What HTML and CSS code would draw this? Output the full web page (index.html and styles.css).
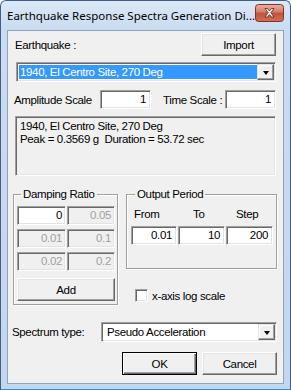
FILE: index.html
```html
<!DOCTYPE html>
<html>
<head>
<meta charset="utf-8">
<link rel="stylesheet" href="styles.css">
</head>
<body>
<div class="window">
  <div class="titlebar">
    <span class="title">Earthquake Response Spectra Generation Di...</span>
    <div class="close">
      <svg width="29" height="18" viewBox="0 0 29 18">
        <defs>
          <linearGradient id="cg" x1="0" y1="0" x2="0" y2="1">
            <stop offset="0" stop-color="#eab1a3"/>
            <stop offset="0.45" stop-color="#d77a66"/>
            <stop offset="0.5" stop-color="#c4513c"/>
            <stop offset="1" stop-color="#d0705a"/>
          </linearGradient>
        </defs>
        <rect x="0.5" y="0.5" width="28" height="17" rx="3" fill="url(#cg)" stroke="#7b3426"/>
        <path d="M10 4.5 L12.5 4.5 L14.5 7 L16.5 4.5 L19 4.5 L15.8 8.8 L19 13 L16.5 13 L14.5 10.6 L12.5 13 L10 13 L13.2 8.8 Z" fill="#fff" stroke="#5a1f15" stroke-width="0.8" stroke-linejoin="round"/>
      </svg>
    </div>
  </div>
  <div class="client">
    <div class="row-eq">
      <span>Earthquake :</span>
      <div class="btn btn-import">Import</div>
    </div>
    <div class="combo combo-eq">
      <div class="combo-val selected">1940, El Centro Site, 270 Deg</div>
      <div class="combo-arrow"><span class="tri"></span></div>
    </div>
    <div class="row-scale">
      <span class="lbl-amp">Amplitude Scale</span>
      <div class="edit edit-scale">1</div>
      <span class="lbl-time">Time Scale :</span>
      <div class="edit edit-scale">1</div>
    </div>
    <div class="memo">1940, El Centro Site, 270 Deg<br>Peak = 0.3569 g&nbsp; Duration = 53.72 sec</div>
    <div class="groups">
      <fieldset class="grp grp-damp">
        <legend>Damping Ratio</legend>
        <div class="damp-grid">
          <div class="edit cell">0</div>
          <div class="edit cell off">0.05</div>
          <div class="edit cell off">0.01</div>
          <div class="edit cell off">0.1</div>
          <div class="edit cell off">0.02</div>
          <div class="edit cell off">0.2</div>
        </div>
        <div class="btn btn-add">Add</div>
      </fieldset>
      <div class="rightcol">
        <fieldset class="grp grp-out">
          <legend>Output Period</legend>
          <div class="out-heads">
            <span class="h-from">From</span>
            <span class="h-to">To</span>
            <span class="h-step">Step</span>
          </div>
          <div class="out-edits">
            <div class="edit oe1">0.01</div>
            <div class="edit oe2">10</div>
            <div class="edit oe3">200</div>
          </div>
        </fieldset>
        <div class="chk"><span class="chk-box"></span><span>x-axis log scale</span></div>
      </div>
    </div>
    <div class="row-spec">
      <span class="lbl-spec">Spectrum type:</span>
      <div class="combo combo-spec">
        <div class="combo-val">Pseudo Acceleration</div>
        <div class="combo-arrow"><span class="tri"></span></div>
      </div>
    </div>
    <div class="row-btns">
      <div class="btn btn-def">OK</div>
      <div class="btn">Cancel</div>
    </div>
  </div>
</div>
</body>
</html>
```
FILE: styles.css
```css
html, body {
  margin: 0;
  padding: 0;
}
body {
  width: 291px;
  height: 390px;
  overflow: hidden;
  font-family: "Liberation Sans", Arial, sans-serif;
  font-size: 11.5px;
  letter-spacing: -0.35px;
  color: #000;
  background: #fff;
}
.window {
  box-sizing: border-box;
  width: 291px;
  height: 390px;
  border: 1px solid #3f5f86;
  border-bottom-color: #2b8fc0;
  border-radius: 6px 6px 0 0;
  background: linear-gradient(#dce8f6 0px, #cadcf1 28px, #c2d6ee 100%);
  padding: 0 6px 5px;
  display: flex;
  flex-direction: column;
}
.titlebar {
  height: 29px;
  display: flex;
  align-items: flex-start;
  justify-content: space-between;
}
.title {
  font-family: "Noto Sans", "Open Sans", sans-serif;
  font-size: 11.5px;
  letter-spacing: 0;
  margin-top: 7px;
  color: #000;
  white-space: nowrap;
}
.close {
  margin-top: 3px;
  width: 29px;
  height: 18px;
}
.close svg { display: block; }
.client {
  flex: 1;
  background: #f0f0f0;
  border: 1px solid #8ea3bf;
  display: flex;
  flex-direction: column;
}

/* controls */
.btn {
  box-sizing: border-box;
  height: 23px;
  width: 75px;
  display: flex;
  align-items: center;
  justify-content: center;
  background: #f0f0f0;
  border: 1px solid;
  border-color: #fff #696969 #696969 #fff;
  box-shadow: inset -1px -1px 0 #a0a0a0, inset 1px 1px 0 #e3e3e3;
}
.btn-def {
  border: 1px solid #000;
  box-shadow: inset 1px 1px 0 #fff, inset -1px -1px 0 #696969, inset -2px -2px 0 #a0a0a0;
}
.edit {
  box-sizing: border-box;
  height: 19px;
  background: #fff;
  border: 1px solid;
  border-color: #a0a0a0 #fff #fff #a0a0a0;
  box-shadow: inset 1px 1px 0 #696969, inset -1px -1px 0 #e3e3e3;
  text-align: right;
  padding-right: 4px;
  line-height: 17px;
}

.row-eq {
  margin: 2px 7px 0 7px;
  height: 23px;
  display: flex;
  align-items: center;
  justify-content: space-between;
}
.combo {
  box-sizing: border-box;
  height: 20px;
  display: flex;
  background: #fff;
  border: 1px solid;
  border-color: #a0a0a0 #fff #fff #a0a0a0;
  box-shadow: inset 1px 1px 0 #696969, inset -1px -1px 0 #e3e3e3;
  padding: 2px;
}
.combo-eq {
  margin: 6px 7px 0 8px;
}
.combo-val {
  flex: 1;
  line-height: 14px;
  padding-left: 1px;
  white-space: nowrap;
  overflow: hidden;
}
.combo-val.selected {
  background: #3399ff;
  color: #fff;
}
.combo-arrow {
  box-sizing: border-box;
  width: 17px;
  height: 16px;
  margin: -1px -1px 0 0;
  background: #f0f0f0;
  border: 1px solid;
  border-color: #e3e3e3 #696969 #696969 #e3e3e3;
  box-shadow: inset -1px -1px 0 #a0a0a0, inset 1px 1px 0 #fff;
  display: flex;
  align-items: center;
  justify-content: center;
}
.tri {
  width: 0;
  height: 0;
  border-left: 3.5px solid transparent;
  border-right: 3.5px solid transparent;
  border-top: 4px solid #000;
  margin-top: 1px;
}

.row-scale {
  margin: 8px 0 0 6px;
  display: flex;
  align-items: center;
  height: 19px;
}
.lbl-amp { width: 86px; white-space: nowrap; }
.edit-scale { width: 51px; }
.lbl-time { width: 62px; margin-left: 12px; white-space: nowrap; }

.memo {
  box-sizing: border-box;
  margin: 7px 0 0 7px;
  width: 261px;
  height: 60px;
  background: #f0f0f0;
  border: 1px solid;
  border-color: #a0a0a0 #fff #fff #a0a0a0;
  box-shadow: inset 1px 1px 0 #696969, inset -1px -1px 0 #e3e3e3;
  padding: 3px 0 0 4px;
  line-height: 13px;
}

.groups {
  display: flex;
  align-items: flex-start;
  margin: 11px 0 0 5px;
}
.grp {
  margin: 0;
  min-width: 0;
  border: 1px solid #a0a0a0;
  box-shadow: inset 1px 1px 0 #fff, 1px 1px 0 #fff;
}
.grp legend {
  padding: 0 2px;
  margin-left: 4px;
  line-height: 14px;
}
.grp-damp {
  box-sizing: border-box;
  width: 105px;
  padding: 5px 3px 3px 3px;
}
.damp-grid {
  display: grid;
  grid-template-columns: 49px 48px;
  column-gap: 1px;
  row-gap: 4px;
}
.cell { padding-right: 3px; }
.cell.off {
  background: #f0f0f0;
  color: #a0a0a0;
}
.btn-add {
  width: 98px;
  margin-top: 7px;
}
.rightcol {
  margin-left: 8px;
  display: flex;
  flex-direction: column;
}
.grp-out {
  box-sizing: border-box;
  width: 151px;
  padding: 6px 3px 23px 4px;
}
.out-heads {
  display: flex;
  height: 14px;
  line-height: 14px;
}
.h-from { width: 47px; padding-left: 3px; box-sizing: border-box; }
.h-to { width: 48px; padding-left: 15px; box-sizing: border-box; }
.h-step { padding-left: 10px; }
.out-edits {
  display: flex;
  gap: 1px;
  margin-top: 5px;
}
.oe1 { width: 46px; }
.oe2 { width: 47px; }
.oe3 { width: 47px; }
.chk {
  margin: 20px 0 0 9px;
  display: flex;
  align-items: center;
  gap: 4px;
}
.chk-box {
  box-sizing: border-box;
  width: 13px;
  height: 13px;
  background: #fff;
  border: 1px solid;
  border-color: #a0a0a0 #fff #fff #a0a0a0;
  box-shadow: inset 1px 1px 0 #696969, inset -1px -1px 0 #e3e3e3;
}

.row-spec {
  margin: 17px 0 0 4px;
  display: flex;
  align-items: center;
}
.lbl-spec { width: 89px; }
.combo-spec { width: 176px; }
.combo-spec .combo-val { padding-left: 3px; }

.row-btns {
  margin: 10px 6px 0 0;
  display: flex;
  justify-content: flex-end;
  gap: 5px;
}
```
